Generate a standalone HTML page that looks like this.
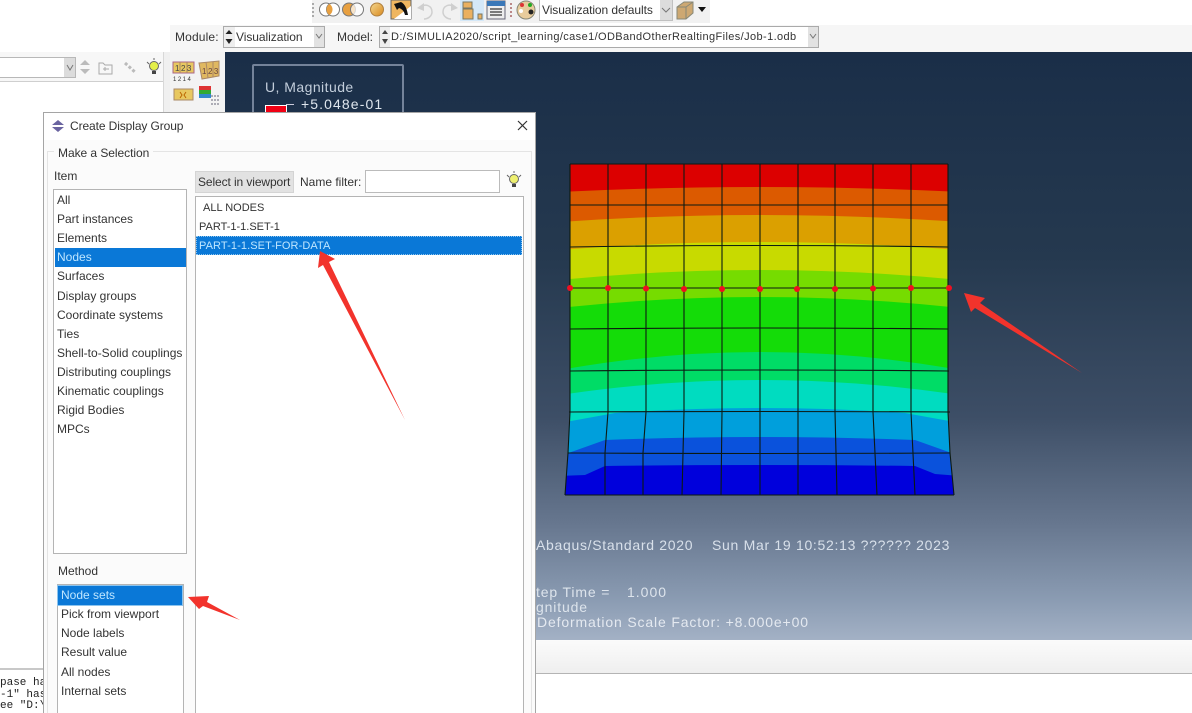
<!DOCTYPE html>
<html><head><meta charset="utf-8"><style>
html,body{margin:0;padding:0;background:#fff}
#p{position:relative;width:1192px;height:713px;overflow:hidden;background:#fff;font-family:"Liberation Sans",sans-serif;color:#333;filter:blur(.35px)}
.b{position:absolute;box-sizing:border-box}
.t{position:absolute;white-space:nowrap;font-size:12px;line-height:14px;color:#333}
.c{font-size:11px}
.sel{color:#bfe6ff}
.vp{font-size:14px;line-height:15px;color:#dde4ec;letter-spacing:.85px}
.m{font-family:"Liberation Mono",monospace;color:#222;font-size:11px;line-height:12px}
svg{position:absolute;left:0;top:0;overflow:visible}
</style></head><body><div id="p">

<div class="b" style="left:312px;top:0;width:398px;height:23px;background:#f1f1f1"></div>
<div class="b" style="left:170px;top:25px;width:1022px;height:27px;background:#f6f6f6"></div>
<div class="b" style="left:0;top:52px;width:170px;height:30px;background:#f7f7f7"></div>
<div class="b" style="left:0;top:81px;width:164px;height:1px;background:#cfcfcf"></div>
<div class="b" style="left:163px;top:52px;width:7px;height:620px;background:#f0f0f0;border-left:1px solid #d8d8d8"></div>
<div class="b" style="left:170px;top:52px;width:55px;height:60px;background:#f3f3f3"></div>
<div class="b" style="left:0;top:668px;width:43px;height:2px;background:#c8c8c8"></div>

<div class="b" style="left:225px;top:52px;width:967px;height:588px;background:linear-gradient(#1a2e48 0%,#25394f 35%,#3d4e66 62%,#66768e 80%,#8a9bb2 93%,#a3b1c5 100%)"></div>
<div class="b" style="left:536px;top:640px;width:656px;height:34px;background:linear-gradient(#fbfbfb,#efefef);border-bottom:1px solid #b4b4b4"></div>

<!-- selectors -->
<div class="b" style="left:0;top:57px;width:76px;height:21px;background:#fff;border:1px solid #b8b8b8;border-left:0"></div>
<div class="b" style="left:64px;top:58px;width:11px;height:19px;background:#dcdcdc"></div>
<div class="b" style="left:223px;top:26px;width:102px;height:22px;background:#fff;border:1px solid #aaa"></div>
<div class="b" style="left:224px;top:27px;width:11px;height:20px;background:#eee"></div>
<div class="b" style="left:314px;top:27px;width:10px;height:20px;background:#e2e2e2"></div>
<div class="b" style="left:379px;top:26px;width:440px;height:22px;background:#fff;border:1px solid #aaa"></div>
<div class="b" style="left:380px;top:27px;width:10px;height:20px;background:#eee"></div>
<div class="b" style="left:808px;top:27px;width:10px;height:20px;background:#e2e2e2"></div>
<div class="b" style="left:539px;top:0;width:134px;height:21px;background:#fff;border:1px solid #c0c0c0;border-top:0"></div>
<div class="b" style="left:660px;top:0;width:12px;height:20px;background:#dcdcdc"></div>

<div class="t" style="left:175px;top:30px;letter-spacing:.15px">Module:</div>
<div class="t" style="left:236px;top:30px;letter-spacing:-.05px">Visualization</div>
<div class="t" style="left:337px;top:30px">Model:</div>
<div class="t c" style="left:391px;top:30px;letter-spacing:.39px">D:/SIMULIA2020/script_learning/case1/ODBandOtherRealtingFiles/Job-1.odb</div>
<div class="t" style="left:542px;top:3px;letter-spacing:-.08px">Visualization defaults</div>

<!-- legend -->
<div class="b" style="left:252px;top:64px;width:152px;height:60px;border:2px solid #74839a;border-radius:2px"></div>
<div class="t" style="left:265px;top:79px;color:#c3cedb;font-size:14px;line-height:16px;letter-spacing:.45px">U, Magnitude</div>
<div class="t" style="left:301px;top:96px;color:#dfe6ee;font-size:14px;line-height:16px;letter-spacing:1.1px">+5.048e-01</div>
<div class="b" style="left:265px;top:105px;width:22px;height:10px;background:#f00014;border:1px solid #fff"></div>
<div class="b" style="left:286px;top:104px;width:8px;height:1px;background:#ccd"></div>

<!-- viewport text -->
<div class="t vp" style="left:536px;top:538px;letter-spacing:.7px;color:#d8e0ea">Abaqus/Standard 2020</div>
<div class="t vp" style="left:712px;top:538px;letter-spacing:.7px;color:#d8e0ea">Sun Mar 19 10:52:13 ?????? 2023</div>
<div class="t vp" style="left:536px;top:585px">tep Time =</div>
<div class="t vp" style="left:627px;top:585px;letter-spacing:1px">1.000</div>
<div class="t vp" style="left:536px;top:600px">gnitude</div>
<div class="t vp" style="left:537px;top:615px;color:#e4e9f0">Deformation Scale Factor: +8.000e+00</div>

<!-- console -->
<div class="t m" style="left:0;top:677px;width:43px;overflow:hidden">pase ha</div>
<div class="t m" style="left:0;top:689px;width:43px;overflow:hidden">-1" has</div>
<div class="t m" style="left:0;top:700px;width:43px;overflow:hidden">ee "D:\</div>

<!-- FEA model and toolbar icons -->
<svg width="1192" height="713" viewBox="0 0 1192 713">
<defs>
<clipPath id="c"><path d="M570 164H948V412L950 453L954 495H565L568 453L570 412Z"/></clipPath>
<linearGradient id="g" x1="0" y1="0" x2="1" y2="1"><stop offset="0" stop-color="#f4d890"/><stop offset="1" stop-color="#d98a1e"/></linearGradient>
</defs>
<g clip-path="url(#c)">
<rect x="560" y="160" width="400" height="340" fill="#0000dc"/>
<path d="M560 160H960V476L935 474L915 466Q760 464 605 466L585 475L560 476Z" fill="#0a52dc"/>
<path d="M560 160H960V456L915 440Q760 434 605 440L560 456Z" fill="#009fdc"/>
<path d="M560 160H960V423L905 413Q760 403 615 413L560 423Z" fill="#00dcc0"/>
<path d="M560 160H960V395Q760 365 560 395Z" fill="#00dc66"/>
<path d="M560 160H960V370Q760 334 560 370Z" fill="#14dc08"/>
<path d="M560 160H960V308Q760 286 560 308Z" fill="#76dc00"/>
<path d="M560 160H960V280Q760 260 560 280Z" fill="#c8da00"/>
<path d="M560 160H960V250Q760 234 560 250Z" fill="#dba000"/>
<path d="M560 160H960V222Q760 208 560 222Z" fill="#dc5a00"/>
<path d="M560 160H960V192Q760 182 560 192Z" fill="#dc0000"/>
</g>
<g stroke="#0c1a12" stroke-width="1.1" fill="none">
<path d="M570 164H948M570 205H948M570 247Q760 244 948 247M570 288H948M570 329Q760 327 948 329M570 371Q760 369 949 371M569 412Q760 411 950 412M568 453Q760 454 950 453M565 495H954"/>
<path d="M570 164V412L568 453L565 495M608 164V412L605 453V495M646 164V412L643 453V495M684 164V412L682 495M722 164V412L721 495M760 164V495M798 164V412V495M835 164V412L837 495M873 164V412L877 495M911 164V412L915 495M948 164V412L950 453L954 495"/>
</g>
<g fill="#f01020">
<circle cx="570" cy="288" r="3"/><circle cx="608" cy="288" r="3"/><circle cx="646" cy="288.500" r="3"/><circle cx="684" cy="289" r="3"/><circle cx="722" cy="289" r="3"/><circle cx="760" cy="289" r="3"/><circle cx="797" cy="289" r="3"/><circle cx="835" cy="289" r="3"/><circle cx="873" cy="288.500" r="3"/><circle cx="911" cy="288" r="3"/><circle cx="949" cy="288" r="3"/>
</g>

<!-- top icons -->
<path d="M313 3v16" stroke="#aaa" stroke-width="2" stroke-dasharray="2 2"/>
<circle cx="326" cy="9.500" r="6.500" fill="#fff" stroke="#777"/><circle cx="333" cy="9.500" r="6.500" fill="#fff" stroke="#777"/><path d="M329.500 4A6.500 6.500 0 0 1 329.500 15A6.500 6.500 0 0 1 329.500 4Z" fill="#e8a040"/>
<circle cx="349" cy="9.500" r="6.500" fill="#e8a040" stroke="#777"/><circle cx="357" cy="9.500" r="6.500" fill="#fff" fill-opacity=".7" stroke="#777"/>
<circle cx="377" cy="9.500" r="6.500" fill="url(#g)" stroke="#b08040"/>
<rect x="391" y="0" width="20" height="19" fill="#efb660" stroke="#666"/><path d="M394 19L411 6V19Z" fill="#fff"/>
<path d="M394 4L401 2C405 4 407 9 408 15L405 15C404 11 402 9 399 8L397 10Z" fill="#111"/>
<g fill="none" stroke="#cfcfcf" stroke-width="1.500"><path d="M420 7C426 3 432 6 432 12C432 16 428 19 424 19"/><path d="M455 7C449 3 443 6 443 12C443 16 447 19 451 19"/></g>
<path d="M417 8L424 3V11Z" fill="#cfcfcf"/><path d="M458 8L451 3V11Z" fill="#cfcfcf"/>
<rect x="460" y="0" width="24" height="21" fill="#d4e8f8"/>
<rect x="463" y="2" width="9" height="6" fill="#eab060" stroke="#776"/><rect x="463" y="9" width="10" height="10" fill="#eab060" stroke="#776"/><rect x="478" y="14" width="4" height="5" fill="#eab060" stroke="#776"/>
<rect x="487" y="1" width="18" height="18" fill="#eee" stroke="#667"/><rect x="487" y="1" width="18" height="5" fill="#3a78b8"/><path d="M490 9h12M490 12h12M490 15h12" stroke="#555" stroke-width="1.500"/>
<path d="M511 3v16" stroke="#b88" stroke-width="2" stroke-dasharray="2 2"/>
<circle cx="526" cy="10" r="9" fill="#e8cc9c" stroke="#887"/><circle cx="522" cy="5" r="2" fill="#d33"/><circle cx="530" cy="5" r="2" fill="#2a2"/><circle cx="531" cy="12" r="2.500" fill="#222"/><circle cx="521" cy="11" r="2" fill="#fff"/>
<path d="M677 7L684 2H693V13L686 19H677Z" fill="#cda872" stroke="#887"/><path d="M677 7H686V19M686 7L693 2" fill="none" stroke="#887"/>
<path d="M698 7H706L702 12Z" fill="#111"/>

<!-- second-row & side icons -->
<path d="M229 30L232.500 34H225.500Z" fill="#222"/><path d="M225.500 39H232.500L229 44Z" fill="#222"/>
<path d="M385 30L388 34H382Z" fill="#444"/><path d="M382 39H388L385 44Z" fill="#444"/>
<path d="M316 34L319 38L322 34M67 65L70 70L73 65M810 34L813 38L816 34M662 8L666 12L670 8" fill="none" stroke="#777"/>
<path d="M85 60L90 65H80ZM80 69H90L85 74Z" fill="#bbb"/>
<path d="M99 63H103L105 65H112V74H99Z" fill="none" stroke="#aaa"/><path d="M103 69H109M105 67V71" stroke="#aaa"/>
<path d="M125 63L136 73" stroke="#bbb" stroke-width="3" stroke-dasharray="3 2"/>
<circle cx="154" cy="66" r="4.500" fill="#e4f04a" stroke="#666"/><rect x="152" y="71" width="4" height="3" fill="#444"/><path d="M147 62L149 64M161 62L159 64M154 58V60" stroke="#666"/>
<rect x="173" y="62" width="21" height="11" fill="#e8c860" stroke="#a68"/><path d="M180 62v11M187 62v11" stroke="#a86"/>
<text x="175" y="71" font-size="8" fill="#444" font-family="Liberation Sans" letter-spacing="1.500">123</text>
<text x="173" y="81" font-size="6" fill="#333" font-family="Liberation Sans" letter-spacing="1.500">1214</text>
<path d="M199 63L219 61V76L202 79Z" fill="#e0b860" stroke="#a86"/><path d="M206 62L208 78M213 62V77" stroke="#a86"/>
<text x="202" y="74" font-size="8" fill="#644" font-family="Liberation Sans" letter-spacing="1.500">123</text>
<rect x="174" y="89" width="19" height="11" fill="#e8c860" stroke="#a86"/><path d="M180 92l2 3-2 3M186 92l-2 3 2 3" stroke="#b60" fill="none"/>
<path d="M199 86H211V90H199Z" fill="#d33"/><path d="M199 90H211V94H199Z" fill="#3a3"/><path d="M199 94H211V98H199Z" fill="#38c"/><path d="M211 96h8M211 100h8M211 104h8" stroke="#667" stroke-dasharray="2 1"/>
</svg>

<!-- dialog -->
<div class="b" style="left:43px;top:112px;width:493px;height:601px;background:#fbfbfb;border:1px solid #a5a5a5;border-bottom:0"></div>
<div class="b" style="left:44px;top:113px;width:491px;height:27px;background:#fff"></div>
<svg width="1192" height="713"><path d="M58 120L64 125H52ZM52 127H64L58 132Z" fill="#6a64a0"/><path d="M518 121L527 130M527 121L518 130" stroke="#333" stroke-width="1.200"/></svg>
<div class="t" style="left:70px;top:119px;letter-spacing:-.1px">Create Display Group</div>
<div class="b" style="left:47px;top:151px;width:485px;height:562px;border:1px solid #e4e4e4;border-bottom:0"></div>
<div class="t" style="left:54px;top:146px;background:#fbfbfb;padding:0 4px;letter-spacing:-.05px">Make a Selection</div>
<div class="t" style="left:54px;top:169px">Item</div>

<div class="b" style="left:53px;top:189px;width:134px;height:365px;background:#fff;border:1px solid #b4b4b4"></div>
<div class="b" style="left:55px;top:248px;width:131px;height:19px;background:#0a78d7"></div>
<div class="t" style="left:57px;top:193px">All</div>
<div class="t" style="left:57px;top:212px">Part instances</div>
<div class="t" style="left:57px;top:231px">Elements</div>
<div class="t sel" style="left:57px;top:250px">Nodes</div>
<div class="t" style="left:57px;top:269px">Surfaces</div>
<div class="t" style="left:57px;top:289px">Display groups</div>
<div class="t" style="left:57px;top:308px">Coordinate systems</div>
<div class="t" style="left:57px;top:327px">Ties</div>
<div class="t" style="left:57px;top:346px">Shell-to-Solid couplings</div>
<div class="t" style="left:57px;top:365px">Distributing couplings</div>
<div class="t" style="left:57px;top:384px">Kinematic couplings</div>
<div class="t" style="left:57px;top:403px">Rigid Bodies</div>
<div class="t" style="left:57px;top:422px">MPCs</div>

<div class="b" style="left:195px;top:171px;width:99px;height:22px;background:#e2e2e2;border:1px solid #d4d4d4"></div>
<div class="t" style="left:198px;top:175px;letter-spacing:-.1px">Select in viewport</div>
<div class="t" style="left:300px;top:175px">Name filter:</div>
<div class="b" style="left:365px;top:170px;width:135px;height:23px;background:#fff;border:1px solid #bbb"></div>
<svg width="1192" height="713"><circle cx="514" cy="179" r="4.500" fill="#eef070" stroke="#666"/><rect x="512" y="184" width="4" height="3" fill="#444"/><path d="M507 175L509 177M521 175L519 177M514 171V173" stroke="#666"/></svg>

<div class="b" style="left:195px;top:196px;width:329px;height:517px;background:#fff;border:1px solid #b4b4b4;border-bottom:0"></div>
<div class="b" style="left:196px;top:236px;width:326px;height:19px;background:#0a78d7;border:1px dotted #8cc4ee"></div>
<div class="t c" style="left:203px;top:201px">ALL NODES</div>
<div class="t c" style="left:199px;top:220px">PART-1-1.SET-1</div>
<div class="t c sel" style="left:199px;top:239px;letter-spacing:.1px">PART-1-1.SET-FOR-DATA</div>

<div class="t" style="left:58px;top:564px">Method</div>
<div class="b" style="left:57px;top:584px;width:127px;height:129px;background:#fff;border:1px solid #b4b4b4;border-bottom:0"></div>
<div class="b" style="left:58px;top:586px;width:124px;height:19px;background:#0a78d7;outline:1px solid #8cc4ee"></div>
<div class="t sel" style="left:61px;top:588px">Node sets</div>
<div class="t" style="left:61px;top:607px">Pick from viewport</div>
<div class="t" style="left:61px;top:626px">Node labels</div>
<div class="t" style="left:61px;top:645px">Result value</div>
<div class="t" style="left:61px;top:665px">All nodes</div>
<div class="t" style="left:61px;top:684px">Internal sets</div>

<!-- red arrows -->
<svg width="1192" height="713">
<path d="M320 251L335 259L329 262L405 420L323 265L318 268Z" fill="#f2332c"/>
<path d="M964 293L985 298L980 303L1082 373L975 308L971 312Z" fill="#f2332c"/>
<path d="M188 597L209 596L207 602L240 620L203 606L199 609Z" fill="#f2332c"/>
</svg>
</div></body></html>
